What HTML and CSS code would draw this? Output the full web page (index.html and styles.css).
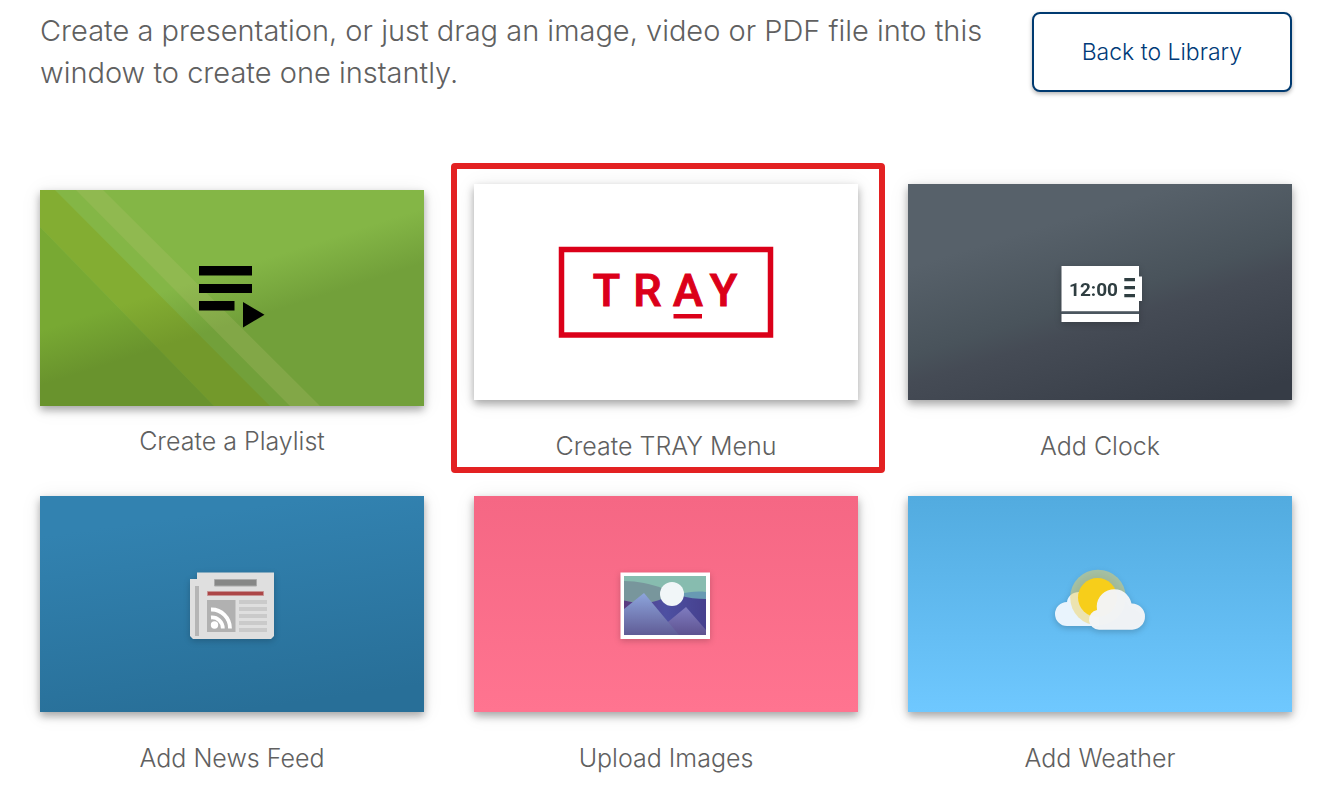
FILE: index.html
```html
<!DOCTYPE html>
<html lang="en">
<head>
  <meta charset="UTF-8">
  <meta name="viewport" content="width=device-width, initial-scale=1.0">
  <title>Create a presentation</title>
  <link rel="stylesheet" href="styles.css">
</head>
<body>
  <div class="container">
    <header class="header">
      <p class="intro">Create a presentation, or just drag an image, video or PDF file into this window to create one instantly.</p>
      <button type="button" class="back">Back to Library</button>
    </header>
    <main class="tiles">
      <a href="#playlist" class="tile tile-playlist">
        <svg class="art" viewBox="0 0 384 216" aria-hidden="true">
          <defs>
            <linearGradient id="green" gradientUnits="userSpaceOnUse" x1="40" y1="128" x2="56" y2="178">
              <stop offset="0" stop-color="#84b646"/>
              <stop offset="1" stop-color="#72a03a"/>
            </linearGradient>
            <linearGradient id="green-corner" gradientUnits="userSpaceOnUse" x1="40" y1="128" x2="56" y2="178">
              <stop offset="0" stop-color="#78a933"/>
              <stop offset="1" stop-color="#69932d"/>
            </linearGradient>
            <linearGradient id="green-olive" gradientUnits="userSpaceOnUse" x1="40" y1="128" x2="56" y2="178">
              <stop offset="0" stop-color="#83ad32"/>
              <stop offset="1" stop-color="#73992b"/>
            </linearGradient>
            <linearGradient id="green-pale" gradientUnits="userSpaceOnUse" x1="40" y1="128" x2="56" y2="178">
              <stop offset="0" stop-color="#90b950"/>
              <stop offset="1" stop-color="#82a747"/>
            </linearGradient>
          </defs>
          <rect width="384" height="216" fill="url(#green)"/>
          <path d="M0 0H15L230 216H174L0 37z" fill="url(#green-olive)"/>
          <path d="M0 37L174 216H0z" fill="url(#green-corner)"/>
          <path d="M36 0H63L280 216H250z" fill="url(#green-pale)"/>
          <path d="M159 76h53v9.500h-53zM159 94h53v9h-53zM159 111h35.500v9.500H159zM203 112l21.500 12.800L203 137.500z"/>
        </svg>
        <span class="label">Create a Playlist</span>
      </a>
      <a href="#tray" class="tile tile-selected">
        <svg class="art art-tray" viewBox="0 0 384 216" aria-hidden="true">
          <rect x="87.500" y="65.500" width="209" height="85.500" fill="none" stroke="#db0019" stroke-width="5.500"/>
          <text class="tray-text" x="132.500 173.500 214 249.500" y="122" text-anchor="middle">TRAY</text>
          <path d="M199.500 130h28.500v4.500h-28.500z" fill="#db0019"/>
        </svg>
        <span class="label">Create TRAY Menu</span>
      </a>
      <a href="#clock" class="tile">
        <svg class="art art-clock" viewBox="0 0 384 216" aria-hidden="true">
          <g class="icon">
            <path d="M153.500 82H231v10.500h3V117h-3v10.500h-77.500zM153.500 130H231v8h-77.500z" fill="#fff"/>
            <path d="M153.500 127.500H231v2.500h-77.500z" fill="#4b565f"/>
            <path d="M216.300 94H227v3.300h-10.700zM216.300 102H227v3.300h-10.700zM216.300 110H227v3.300h-10.700z" fill="#2f3e41"/>
            <text class="clock-text" x="185.500" y="112" text-anchor="middle">12:00</text>
          </g>
        </svg>
        <span class="label">Add Clock</span>
      </a>
      <a href="#news" class="tile">
        <svg class="art art-news" viewBox="0 0 384 216" aria-hidden="true">
          <g class="icon">
            <path d="M157 76.500h77V140l-3 3h-78l-3-3V83h7z" fill="#dfdfdf"/>
            <path d="M155 90h4v50h-4z" fill="#b5b5b5"/>
            <path d="M174.500 83.500h42v6.500h-42z" fill="#868786" stroke="#aaa"/>
            <path d="M167.500 95.500h56v4h-56z" fill="#ac4647" stroke="#c79293"/>
            <path d="M167 104h28.500v32H167z" fill="#b1b1b1"/>
            <circle cx="174.500" cy="129" r="3.700" fill="#fff"/>
            <path d="M171 121.500a10.800 10.800 0 0 1 11.800 11M171 113.500a18.500 19 0 0 1 19 19" fill="none" stroke="#fff" stroke-width="3.800"/>
            <path d="M199 104h28v4h-28zM199 111h28v4h-28zM199 118h28v4h-28zM199 125h28v4h-28zM199 132h28v4h-28z" fill="#cacaca"/>
          </g>
        </svg>
        <span class="label">Add News Feed</span>
      </a>
      <a href="#images" class="tile">
        <svg class="art art-images" viewBox="0 0 384 216" aria-hidden="true">
          <defs>
            <linearGradient id="peak" x1="0" y1="0" x2="0" y2="1">
              <stop offset="0" stop-color="#8da5dc"/>
              <stop offset="1" stop-color="#605c96"/>
            </linearGradient>
            <linearGradient id="peak-small" x1="0" y1="0" x2="0" y2="1">
              <stop offset="0" stop-color="#7f7cc0"/>
              <stop offset="1" stop-color="#5e5290"/>
            </linearGradient>
            <linearGradient id="valley" x1="0" y1="0" x2="1" y2="0">
              <stop offset="0" stop-color="#5b3a80"/>
              <stop offset=".5" stop-color="#4d50a2"/>
              <stop offset="1" stop-color="#46408e"/>
            </linearGradient>
          </defs>
          <g class="icon">
            <path d="M146.500 76.500h89.500v66.500h-89.500z" fill="#fff"/>
            <path d="M150 80h82v55.500h-82z" fill="#87bcaf"/>
            <path d="M150 85c14 0 26 3 38 7v18h-38z" fill="#78969c"/>
            <path d="M206 98c8-2 17-3 26-2v10h-26z" fill="#689ab3"/>
            <path d="M150 104.500c4 1 8 2 12 1.500h16c6-1 9-3 13-5l14-2c9 3 18 4 27 4v36h-82z" fill="url(#valley)"/>
            <circle cx="198" cy="98" r="12" fill="#f1f6f8"/>
            <path d="M212 111l20 23v5h-42l-1-9z" fill="url(#peak-small)"/>
            <path d="M170 97l35 42h-55v-26z" fill="url(#peak)"/>
          </g>
        </svg>
        <span class="label">Upload Images</span>
      </a>
      <a href="#weather" class="tile">
        <svg class="art art-weather" viewBox="0 0 384 216" aria-hidden="true">
          <g class="icon">
            <path d="M159 130a12 12 0 0 1 0-24c.600-6 6-10 12-10h20v34z" fill="#e9f4fd"/>
            <circle cx="190" cy="101.500" r="27.800" fill="#efd263" opacity=".5"/>
            <circle cx="189.500" cy="101.500" r="19.500" fill="#f7ce1a"/>
            <path d="M191 133.700a10 10 0 0 1-2-19.800a17.500 17.500 0 0 1 34.500-6.400a13.100 13.100 0 0 1 .8 26.200z" fill="#f3f4f6" opacity=".98"/>
          </g>
        </svg>
        <span class="label">Add Weather</span>
      </a>
    </main>
  </div>
</body>
</html>
```

FILE: styles.css
```css
* {
  box-sizing: border-box;
}
body {
  margin: 0;
  background: #fff;
  color: #606060;
  font-family: 'Inter', Arial, Helvetica, sans-serif;
  font-weight: 300;
}
.container {
  padding: 10px 48px 14px 40px;
}
.header {
  display: flex;
  align-items: center;
  gap: 40px;
  margin-bottom: 90px;
}
.intro {
  flex: 1;
  margin: 0;
  font-size: 29px;
  line-height: 42px;
}
.back {
  height: 80px;
  padding: 0 48px;
  border: 2px solid #003a70;
  border-radius: 8px;
  background: #fff;
  box-shadow: 0 2px 4px rgba(0, 0, 0, 0.3);
  color: #003a78;
  font-family: inherit;
  font-size: 23px;
  font-weight: 300;
  white-space: nowrap;
}
.tiles {
  display: grid;
  grid-template-columns: repeat(3, 1fr);
  gap: 32px 50px;
}
.tile {
  display: flex;
  flex-direction: column;
  position: relative;
  color: inherit;
  text-decoration: none;
}
.tile-playlist {
  padding-top: 6px;
}
.art {
  display: block;
  width: 100%;
  aspect-ratio: 16 / 9;
  box-shadow: 0 4px 8px rgba(0, 0, 0, 0.32), 0 2px 20px rgba(0, 0, 0, 0.08);
}
.art-tray {
  background: #fff;
}
.art-clock {
  background: linear-gradient(163deg, #57616a 25%, #49535b 52%, #454b55 60%, #363c46 94%);
}
.art-news {
  background: linear-gradient(172deg, #3282b0 15%, #286f98 90%);
}
.art-images {
  background: linear-gradient(#f56784, #ff7490);
}
.art-weather {
  background: linear-gradient(#52abdf, #6fc8ff);
}
.icon {
  filter: drop-shadow(0 2px 3px rgba(0, 0, 0, 0.2));
}
.tray-text {
  fill: #db0019;
  stroke: #db0019;
  stroke-width: 1px;
  font-family: Roboto, Arial, sans-serif;
  font-size: 45px;
  font-weight: 500;
}
.clock-text {
  fill: #2f3e41;
  font-family: Roboto, Arial, sans-serif;
  font-size: 19px;
  font-weight: 700;
}
.label {
  margin-top: 28px;
  font-size: 25px;
  line-height: 36px;
  text-align: center;
}
.tile-playlist .label {
  margin-top: 17px;
}
/* red frame round the highlighted tile */
.tile-selected::after {
  content: '';
  position: absolute;
  inset: -21px -27px -9px -23px;
  border: 6px solid #e32122;
  border-radius: 4px;
  pointer-events: none;
}
```
